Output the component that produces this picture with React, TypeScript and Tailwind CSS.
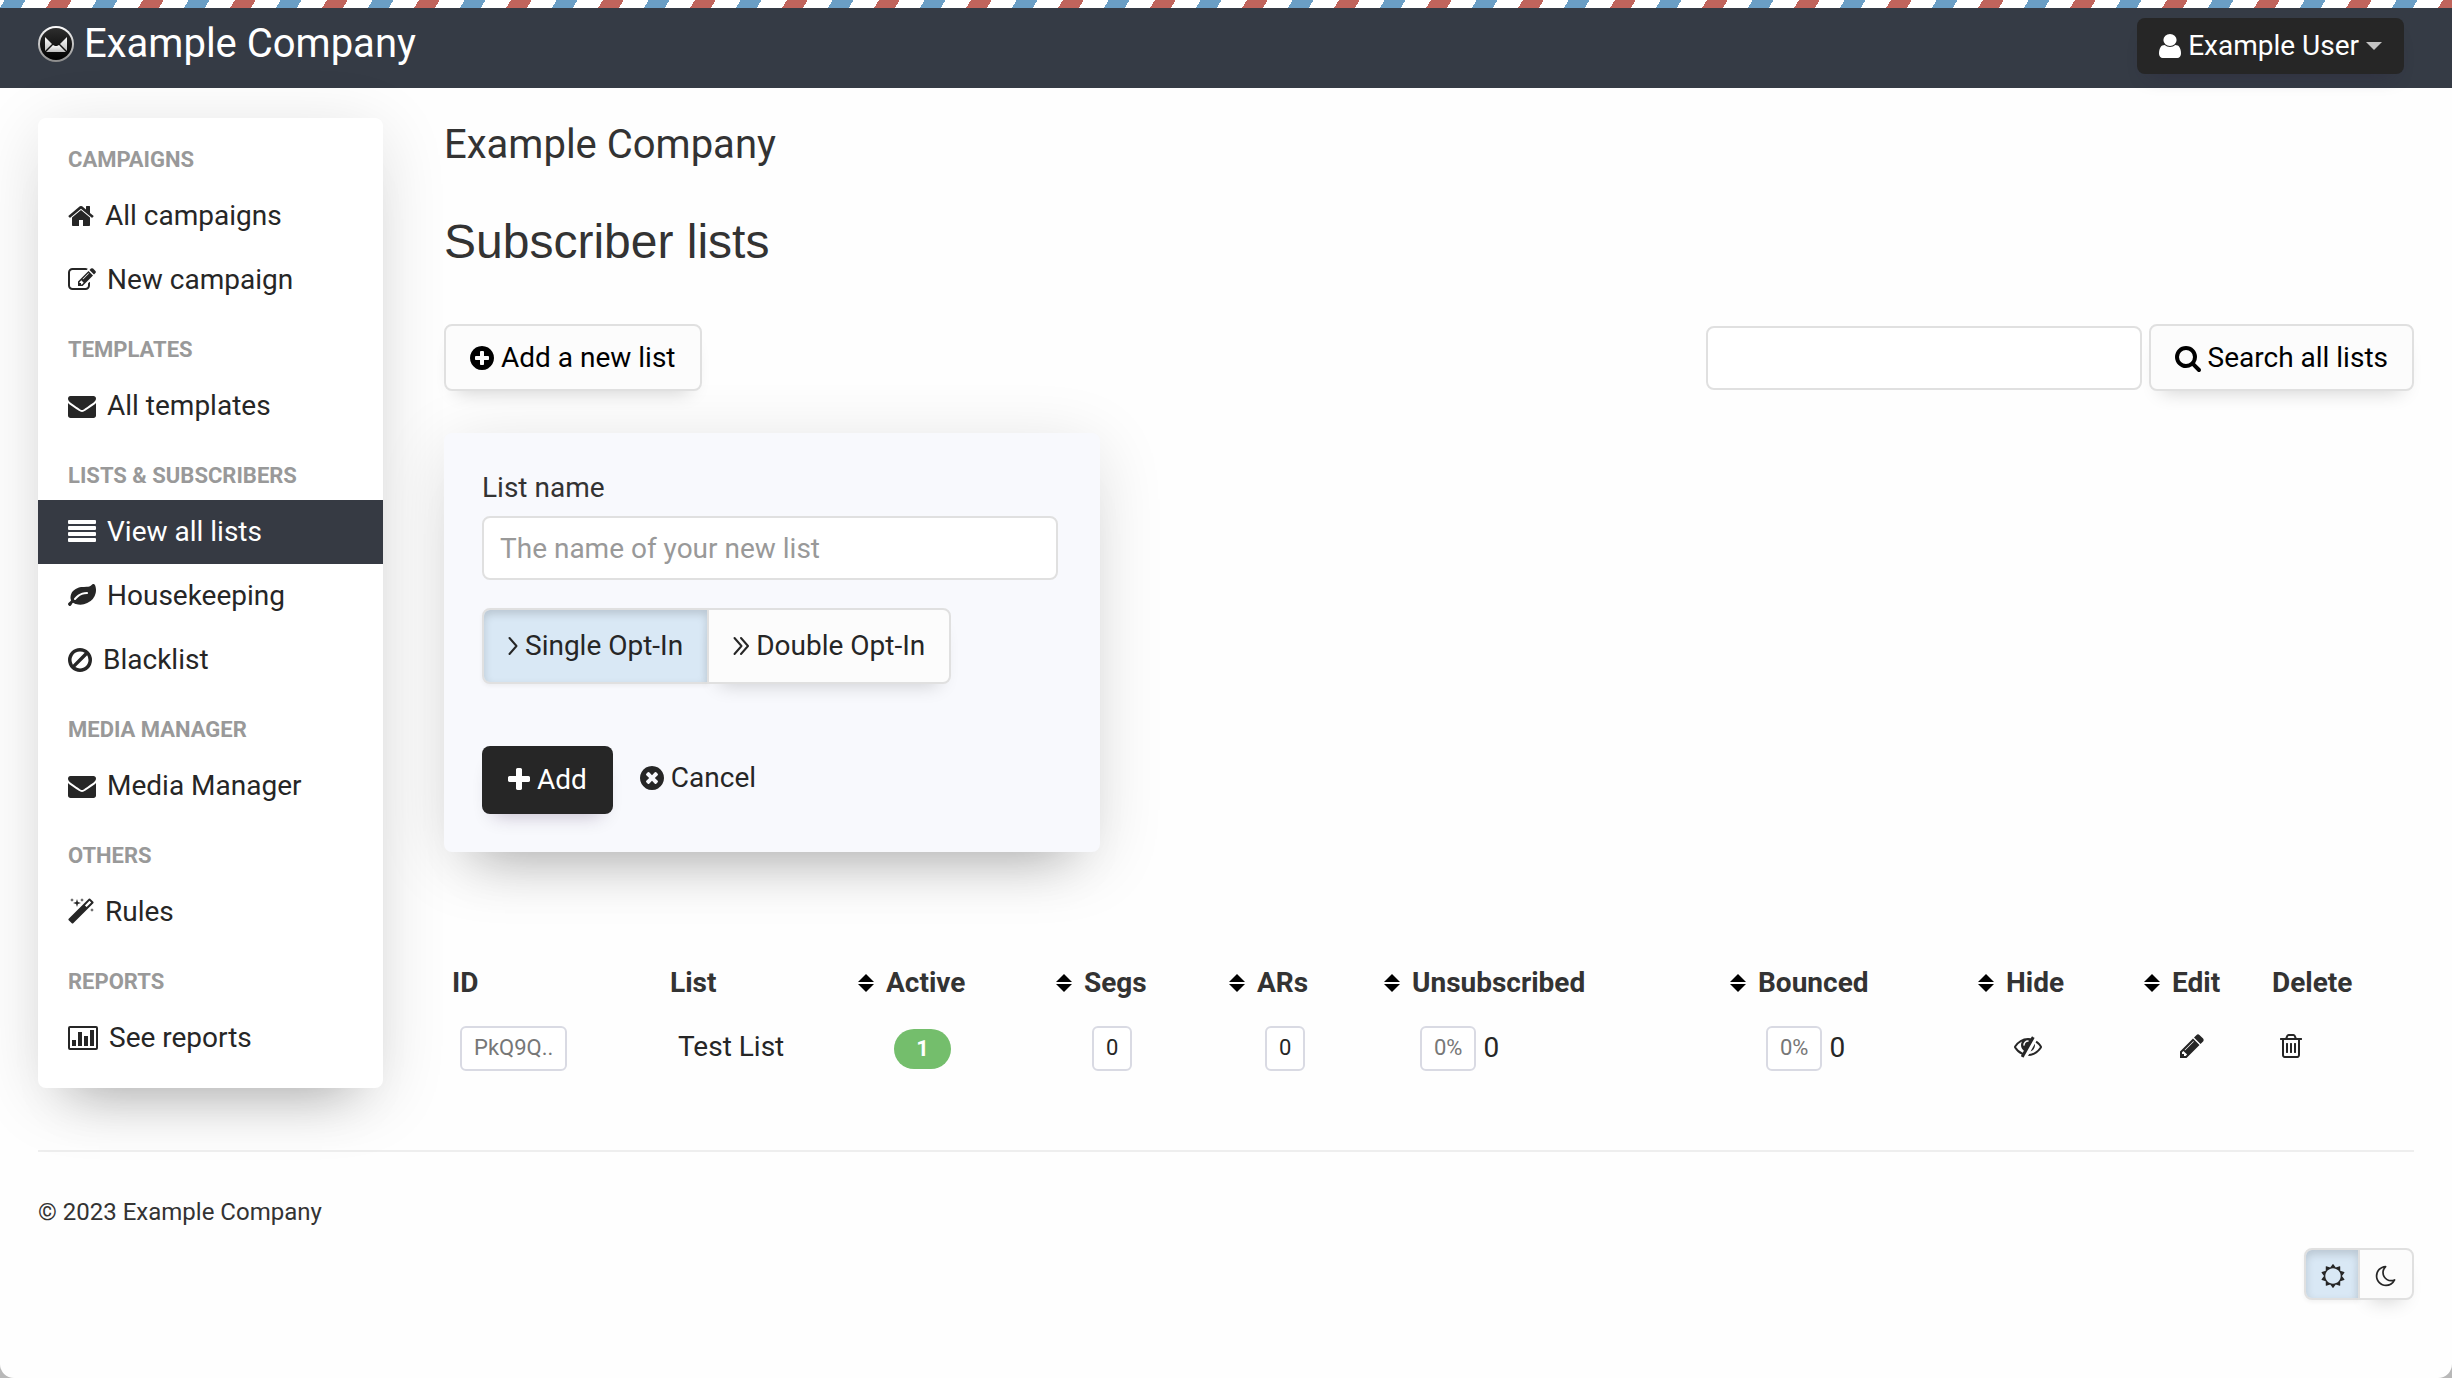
import React, { useState } from "react";

type IconDef = { box: string; w: number; h: number; d: string; stretch?: boolean };

const CIRCLE =
  "m387-226q0 209-103 385.5t-279.5 279.5-385.5 103-385.5-103-279.5-279.5-103-385.5 103-385.5 279.5-279.5 385.5-103 385.5 103 279.5 279.5 103 385.5z";

const icons = {
  home: {
    box: "89 0 1614 1792", w: 26, h: 28,
    d: "M1472 992v480q0 26-19 45t-45 19h-384v-384h-256v384h-384q-26 0-45-19t-19-45v-480q0-1 .5-3t.5-3l575-474 575 474q1 2 1 6zm223-69l-62 74q-8 9-21 11h-3q-13 0-21-7l-692-577-692 577q-12 8-24 7-13-2-21-11l-62-74q-8-10-7-23.5t11-21.5l719-599q32-26 76-26t76 26l244 204v-195q0-14 9-23t23-9h192q14 0 23 9t9 23v408l219 182q10 8 11 21.5t-7 23.5z",
  },
  edit: {
    box: "0 0 1792 1792", w: 28, h: 28,
    d: "M888 1184l116-116-152-152-116 116v56h96v96h56zm440-720q-16-16-33 1l-350 350q-17 17-1 33t33-1l350-350q17-17 1-33zm80 594v190q0 119-84.5 203.5t-203.5 84.5h-832q-119 0-203.5-84.5t-84.5-203.5v-832q0-119 84.5-203.5t203.5-84.5h832q63 0 117 25 15 7 18 23 3 17-9 29l-49 49q-14 14-32 8-23-6-45-6h-832q-66 0-113 47t-47 113v832q0 66 47 113t113 47h832q66 0 113-47t47-113v-126q0-13 9-22l64-64q15-15 35-7t20 29zm-96-738l288 288-672 672h-288v-288zm444 132l-92 92-288-288 92-92q28-28 68-28t68 28l152 152q28 28 28 68t-28 68z",
  },
  envelope: {
    box: "0 0 1792 1792", w: 28, h: 28,
    d: "M1792 710v794q0 66-47 113t-113 47h-1472q-66 0-113-47t-47-113v-794q44 49 101 87 362 246 497 345 57 42 92.5 65.5t94.5 48 110 24.5h2q51 0 110-24.5t94.5-48 92.5-65.5q170-123 498-345 57-39 100-87zm0-294q0 79-49 151t-122 123q-376 261-468 325-10 7-42.5 31t-54 38.5-52 32.5-57.5 27-50 9h-2q-23 0-50-9t-57.5-27-52-32.5-54-38.5-42.5-31q-91-64-262-182.5t-205-142.5q-62-42-117-115.5t-55-136.5q0-78 41.5-130t118.5-52h1472q65 0 112.5 47t47.5 113z",
  },
  rows: {
    box: "0 0 28 28", w: 28, h: 28,
    d: "M1 2h26a1 1 0 0 1 1 1v2a1 1 0 0 1-1 1H1a1 1 0 0 1-1-1V3a1 1 0 0 1 1-1zM1 8h26a1 1 0 0 1 1 1v2a1 1 0 0 1-1 1H1a1 1 0 0 1-1-1V9a1 1 0 0 1 1-1zM1 14h26a1 1 0 0 1 1 1v2a1 1 0 0 1-1 1H1a1 1 0 0 1-1-1v-2a1 1 0 0 1 1-1zM1 20h26a1 1 0 0 1 1 1v2a1 1 0 0 1-1 1H1a1 1 0 0 1-1-1v-2a1 1 0 0 1 1-1z",
  },
  leaf: {
    box: "0 0 1792 1792", w: 28, h: 28,
    d: "M1280 704q0-26-19-45t-45-19q-172 0-318 49.5t-259.5 134-235.5 219.5q-19 21-19 45 0 26 19 45t45 19q24 0 45-19 27-24 74-71t67-66q137-124 268.5-176t313.5-52q26 0 45-19t19-45zm512-198q0 95-20 193-46 224-184.5 383t-357.5 268q-214 108-438 108-148 0-286-47-15-5-88-42t-96-37q-16 0-39.5 32t-45 70-52.5 70-60 32q-43 0-63.5-17.5t-45.5-59.5q-2-4-6-11t-5.5-10-3-9.5-1.5-13.5q0-35 31-73.5t68-65.5 68-56 31-48q0-4-14-38t-16-44q-9-51-9-104 0-115 43.5-220t119-184.5 170.5-139 204-95.5q55-18 145-25.5t179.5-9 178.5-6 163.5-24 113.5-56.5l29.5-29.5 29.5-28 27-20 36.5-16 43.5-4.5q39 0 70.5 46t47.5 112 24 124 8 96z",
  },
  ban: {
    box: "128 0 1536 1792", w: 24, h: 28,
    d: "M1440 893q0-161-87-295l-754 753q137 89 297 89 111 0 211.5-43.5t173.5-116.5 116-174.5 43-212.5zm-999 299l755-754q-135-91-300-91-148 0-273 73t-198 199-73 274q0 162 89 299zm1223-299q0 157-61 300t-163.5 246-245 164-298.5 61-298.5-61-245-164-163.5-246-61-300 61-299.5 163.5-245.5 245-164 298.5-61 298.5 61 245 164 163.5 245.5 61 299.5z",
  },
  magic: {
    box: "64 0 1664 1792", w: 26, h: 28,
    d: "M1254 581l293-293-107-107-293 293zm447-293q0 27-18 45l-1286 1286q-18 18-45 18t-45-18l-198-198q-18-18-18-45t18-45l1286-1286q18-18 45-18t45 18l198 198q18 18 18 45zm-1351-190l98 30-98 30-30 98-30-98-98-30 98-30 30-98zm350 162l196 60-196 60-60 196-60-196-196-60 196-60 60-196zm930 478l98 30-98 30-30 98-30-98-98-30 98-30 30-98zm-640-640l98 30-98 30-30 98-30-98-98-30 98-30 30-98z",
  },
  chart: {
    box: "0 0 30 28", w: 30, h: 28,
    d: "M2 2h26a2 2 0 0 1 2 2v20a2 2 0 0 1-2 2H2a2 2 0 0 1-2-2V4a2 2 0 0 1 2-2zM2 4v20h26V4zM4 16h4v6H4zM10 8h4v14h-4zM16 12h4v10h-4zM22 6h4v16h-4z",
  },
  user: {
    box: "256 0 1280 1536", w: 22, h: 24, stretch: true,
    d: "M1536 1271q0 109-62.5 187t-150.5 78h-854q-88 0-150.5-78t-62.5-187q0-85 8.5-160.5t31.5-152 58.5-131 94-89 134.5-34.5q131 128 313 128t313-128q76 0 134.5 34.5t94 89 58.5 131 31.5 152 8.5 160.5zm-256-887q0 159-112.5 271.5t-271.5 112.5-271.5-112.5-112.5-271.5 112.5-271.5 271.5-112.5 271.5 112.5 112.5 271.5z",
  },
  search: {
    box: "64 0 1664 1792", w: 26, h: 28,
    d: "M1216 832q0-185-131.5-316.5t-316.5-131.5-316.5 131.5-131.5 316.5 131.5 316.5 316.5 131.5 316.5-131.5 131.5-316.5zm512 832q0 52-38 90t-90 38q-54 0-90-38l-343-342q-179 124-399 124-143 0-273.5-55.5t-225-150-150-225-55.5-273.5 55.5-273.5 150-225 225-150 273.5-55.5 273.5 55.5 225 150 150 225 55.5 273.5q0 220-124 399l343 343q37 37 37 90z",
  },
  plusCircle: {
    box: "128 0 1536 1792", w: 24, h: 28,
    d: "M1344 960v-128q0-26-19-45t-45-19h-256v-256q0-26-19-45t-45-19h-128q-26 0-45 19t-19 45v256h-256q-26 0-45 19t-19 45v128q0 26 19 45t45 19h256v256q0 26 19 45t45 19h128q26 0 45-19t19-45v-256h256q26 0 45-19t19-45zm320-64q0 209-103 385.5t-279.5 279.5-385.5 103-385.5-103-279.5-279.5-103-385.5 103-385.5 279.5-279.5 385.5-103 385.5 103 279.5 279.5 103 385.5z",
  },
  timesCircle: {
    box: "128 0 1536 1792", w: 24, h: 28,
    d:
      "M1277 1122q0-26-19-45l-181-181 181-181q19-19 19-45 0-27-19-46l-90-90q-19-19-46-19-26 0-45 19l-181 181-181-181q-19-19-45-19-27 0-46 19l-90 90q-19 19-19 46 0 26 19 45l181 181-181 181q-19 19-19 45 0 27 19 46l90 90q19 19 46 19 26 0 45-19l181-181 181 181q19 19 45 19 27 0 46-19l90-90q19-19 19-46z" +
      CIRCLE,
  },
  plus: {
    box: "192 0 1408 1792", w: 22, h: 28,
    d: "M1600 736v192q0 40-28 68t-68 28h-416v416q0 40-28 68t-68 28h-192q-40 0-68-28t-28-68v-416h-416q-40 0-68-28t-28-68v-192q0-40 28-68t68-28h416v-416q0-40 28-68t68-28h192q40 0 68 28t28 68v416h416q40 0 68 28t28 68z",
  },
  pencil: {
    box: "128 128 1536 1536", w: 24, h: 24,
    d: "M491 1536l91-91-235-235-91 91v107h128v128h107zm523-928q0-22-22-22-10 0-17 7l-542 542q-7 7-7 17 0 22 22 22 10 0 17-7l542-542q7-7 7-17zm-54-192l416 416-832 832h-416v-416zm683 96q0 53-37 90l-166 166-416-416 166-165q36-38 90-38 53 0 91 38l235 234q37 39 37 91z",
  },
  trash: {
    box: "192 128 1408 1536", w: 22, h: 24,
    d: "M704 736v576q0 14-9 23t-23 9h-64q-14 0-23-9t-9-23v-576q0-14 9-23t23-9h64q14 0 23 9t9 23zm256 0v576q0 14-9 23t-23 9h-64q-14 0-23-9t-9-23v-576q0-14 9-23t23-9h64q14 0 23 9t9 23zm256 0v576q0 14-9 23t-23 9h-64q-14 0-23-9t-9-23v-576q0-14 9-23t23-9h64q14 0 23 9t9 23zm128 724v-948h-896v948q0 22 7 40.5t14.5 27 10.5 8.5h832q3 0 10.5-8.5t14.5-27 7-40.5zm-672-1076h448l-48-117q-7-9-17-11h-317q-10 2-17 11zm928 32v64q0 14-9 23t-23 9h-96v948q0 83-47 143.5t-113 60.5h-832q-66 0-113-58.5t-47-141.5v-952h-96q-14 0-23-9t-9-23v-64q0-14 9-23t23-9h309l70-167q15-37 54-63t79-26h320q40 0 79 26t54 63l70 167h309q14 0 23 9t9 23z",
  },
  eyeSlash: {
    box: "0 128 1792 1536", w: 28, h: 24,
    d: "M555 1335l78-141q-87-63-136-159t-49-203q0-121 61-225-229 117-381 353 167 258 427 375zm389-759q0-20-14-34t-34-14q-125 0-214.5 89.5t-89.5 214.5q0 20 14 34t34 14 34-14 14-34q0-86 61-147t147-61q20 0 34-14t14-34zm363-191q0 7-1 9-106 189-316 567t-315 566l-49 89q-10 16-28 16-12 0-134-70-16-10-16-28 0-12 44-87-143-65-263.5-173t-208.5-245q-20-31-20-69t20-69q153-235 380-371t496-136q89 0 180 17l54-97q10-16 28-16 5 0 18 6t31 15.5 33 18.5 31.5 18.5 19.5 11.5q16 10 16 27zm37 447q0 139-79 253.5t-209 164.5l280-502q8 45 8 84zm448 128q0 35-20 69-39 64-109 145-150 172-347.5 267t-419.5 95l74-132q212-18 392.5-137t301.5-307q-115-179-282-294l63-112q95 64 182.5 153t144.5 184q20 34 20 69z",
  },
  sun: {
    box: "0 0 1792 1792", w: 24, h: 24,
    d: "M1472 896q0-117-45.5-223.5t-123-184-184-123-223.5-45.5-223.5 45.5-184 123-123 184-45.5 223.5 45.5 223.5 123 184 184 123 223.5 45.5 223.5-45.5 184-123 123-184 45.5-223.5zm276 277q-4 15-20 20l-292 96v306q0 16-13 26-15 10-29 4l-292-94-180 248q-10 13-26 13t-26-13l-180-248-292 94q-14 6-29-4-13-10-13-26v-306l-292-96q-16-5-20-20-5-17 4-29l180-248-180-248q-9-13-4-29 4-15 20-20l292-96v-306q0-16 13-26 15-10 29-4l292 94 180-248q9-12 26-12t26 12l180 248 292-94q14-6 29 4 13 10 13 26v306l292 96q16 5 20 20 5 16-4 29l-180 248 180 248q9 12 4 29z",
  },
  moon: {
    box: "0 0 1792 1792", w: 24, h: 24,
    d: "M1390 1303q-54 9-110 9-182 0-337-90t-245-245-90-337q0-192 104-357-201 60-328.5 229t-127.5 384q0 130 51 248.5t136.5 204 204 136.5 248.5 51q144 0 273.5-61.5t220.5-171.5zm203-85q-94 203-283.5 324.5t-413.5 121.5q-156 0-298-61t-245-164-164-245-61-298q0-153 57.5-292.5t156-241.5 235.5-164.5 290-68.5q44-2 61 39 18 41-15 72-86 78-131.5 181.5t-45.5 218.5q0 148 73 273t198 198 273 73q118 0 228-51 41-18 72 13 14 14 17.5 34t-4.5 38z",
  },
} satisfies Record<string, IconDef>;

type IconName = keyof typeof icons;

function Icon({ name, className = "" }: { name: IconName; className?: string }) {
  const icon: IconDef = icons[name];
  return (
    <svg
      aria-hidden="true"
      viewBox={icon.box}
      width={icon.w}
      height={icon.h}
      preserveAspectRatio={icon.stretch ? "none" : "xMidYMid meet"}
      fill="currentColor"
      fillRule="evenodd"
      className={`shrink-0 ${className}`}
    >
      <path d={icon.d} />
    </svg>
  );
}

function Angle({ double = false }: { double?: boolean }) {
  return (
    <svg
      aria-hidden="true"
      viewBox={double ? "0 0 16 20" : "0 0 10 20"}
      width={double ? 16 : 10}
      height={20}
      fill="none"
      stroke="currentColor"
      strokeWidth={2}
      strokeLinecap="round"
      strokeLinejoin="round"
      className="shrink-0"
    >
      <path d="M1.500 2l7 8-7 8" />
      {double && <path d="M8 2l7 8-7 8" />}
    </svg>
  );
}

function Logo() {
  return (
    <svg aria-hidden="true" viewBox="0 0 36 36" className="size-9 shrink-0">
      <defs>
        <linearGradient id="ring" x1="0" y1="0" x2="0" y2="1">
          <stop offset="0" stopColor="#ffffff" />
          <stop offset="1" stopColor="#8a8a8a" />
        </linearGradient>
        <linearGradient id="disc" x1="0" y1="0" x2="0" y2="1">
          <stop offset="0" stopColor="#2e2e2e" />
          <stop offset="1" stopColor="#000000" />
        </linearGradient>
        <linearGradient id="mail" x1="0" y1="0" x2="0" y2="1">
          <stop offset="0" stopColor="#ffffff" />
          <stop offset="1" stopColor="#bdbdbd" />
        </linearGradient>
      </defs>
      <circle cx="18" cy="18" r="18" fill="url(#ring)" />
      <circle cx="18" cy="18" r="16" fill="url(#disc)" />
      <path d="M7 11l7 7-7 7z" fill="url(#mail)" />
      <path d="M29 11l-7 7 7 7z" fill="url(#mail)" />
      <path d="M15 19l2 1h2l2-1 7 7H8z" fill="url(#mail)" />
    </svg>
  );
}

const navGroups: { title: string; items: { label: string; icon: IconName; active?: boolean }[] }[] = [
  { title: "CAMPAIGNS", items: [{ label: "All campaigns", icon: "home" }, { label: "New campaign", icon: "edit" }] },
  { title: "TEMPLATES", items: [{ label: "All templates", icon: "envelope" }] },
  {
    title: "LISTS & SUBSCRIBERS",
    items: [
      { label: "View all lists", icon: "rows", active: true },
      { label: "Housekeeping", icon: "leaf" },
      { label: "Blacklist", icon: "ban" },
    ],
  },
  { title: "MEDIA MANAGER", items: [{ label: "Media Manager", icon: "envelope" }] },
  { title: "OTHERS", items: [{ label: "Rules", icon: "magic" }] },
  { title: "REPORTS", items: [{ label: "See reports", icon: "chart" }] },
];

const cardShadow = "shadow-[0_12px_70px_-4px_rgba(0,0,0,0.14),0_40px_50px_-36px_rgba(0,0,0,0.25)]";

function Sidebar() {
  return (
    <nav aria-label="Main" className={`w-[345px] shrink-0 rounded-lg bg-white pt-1 pb-[18px] ${cardShadow}`}>
      {navGroups.map((group) => (
        <section key={group.title}>
          <h2 className="px-[30px] pt-[14px] text-[22px] leading-[48px] font-bold text-[#999999]">{group.title}</h2>
          <ul>
            {group.items.map((item) => (
              <li key={item.label}>
                <a
                  href="#"
                  aria-current={item.active ? "page" : undefined}
                  className={`flex h-16 items-center gap-[11px] px-[30px] ${
                    item.active ? "bg-[#363a43] text-white" : "text-[#262626]"
                  }`}
                >
                  <Icon name={item.icon} />
                  {item.label}
                </a>
              </li>
            ))}
          </ul>
        </section>
      ))}
    </nav>
  );
}

const buttonShadow = "shadow-[0_12px_20px_-12px_rgba(0,0,0,0.2)]";
const pressed =
  "bg-[#d9e8f5] shadow-[inset_0_4px_8px_rgba(0,0,0,0.15),0_2px_4px_rgba(0,0,0,0.05)]";

function NewListForm() {
  const [optIn, setOptIn] = useState<"single" | "double">("single");
  return (
    <form
      onSubmit={(e) => e.preventDefault()}
      className={`mt-[42px] w-[656px] rounded-lg bg-[#f8f9fd] px-[38px] pt-[35px] pb-[38px] ${cardShadow}`}
    >
      <label htmlFor="list-name" className="block leading-10">
        List name
      </label>
      <input
        id="list-name"
        type="text"
        placeholder="The name of your new list"
        className="mt-2 block h-16 w-[576px] rounded-lg border-2 border-[#e0e0e0] bg-white px-4 placeholder:text-[#999999]"
      />
      <div className="mt-7 flex text-[#262626]" role="group" aria-label="Opt-in type">
        <button
          type="button"
          aria-pressed={optIn === "single"}
          onClick={() => setOptIn("single")}
          className={`flex h-[76px] items-center gap-[7px] rounded-l-lg border-2 border-[#e0e0e0] px-6 ${
            optIn === "single" ? pressed : `bg-[#fcfcfc] ${buttonShadow}`
          }`}
        >
          <Angle />
          Single Opt-In
        </button>
        <button
          type="button"
          aria-pressed={optIn === "double"}
          onClick={() => setOptIn("double")}
          className={`-ml-0.5 flex h-[76px] items-center gap-[7px] rounded-r-lg border-2 border-[#e0e0e0] px-6 ${
            optIn === "double" ? pressed : `bg-[#fcfcfc] ${buttonShadow}`
          }`}
        >
          <Angle double />
          Double Opt-In
        </button>
      </div>
      <div className="mt-[62px] flex gap-[27px]">
        <button
          type="submit"
          className="flex h-[68px] items-center gap-[7px] rounded-lg bg-[#262626] px-[26px] text-white shadow-[0_12px_20px_-12px_rgba(40,10,60,0.3)]"
        >
          <Icon name="plus" />
          Add
        </button>
        <a href="#" className="flex h-16 items-center gap-[7px] text-[#262626]">
          <Icon name="timesCircle" />
          Cancel
        </a>
      </div>
    </form>
  );
}

const columns: { label: string; width: string; sortable: boolean }[] = [
  { label: "ID", width: "w-[218px]", sortable: false },
  { label: "List", width: "w-[216px]", sortable: true },
  { label: "Active", width: "w-[198px]", sortable: true },
  { label: "Segs", width: "w-[173px]", sortable: true },
  { label: "ARs", width: "w-[155px]", sortable: true },
  { label: "Unsubscribed", width: "w-[346px]", sortable: true },
  { label: "Bounced", width: "w-[248px]", sortable: true },
  { label: "Hide", width: "w-[166px]", sortable: true },
  { label: "Edit", width: "w-[100px]", sortable: false },
  { label: "Delete", width: "w-[150px]", sortable: false },
];

function SortMark() {
  return (
    <svg aria-hidden="true" viewBox="0 0 16 18" width={16} height={18} className="shrink-0 fill-black">
      <path d="M8 0l8 8H0zM0 10h16l-8 8z" />
    </svg>
  );
}

function Tag({ children, muted = false }: { children: React.ReactNode; muted?: boolean }) {
  return (
    <span
      className={`inline-flex h-[45px] items-center rounded-md border-2 border-[#d9dae3] bg-white px-3 text-[22px] ${
        muted ? "text-[#777777]" : "text-[#262626]"
      }`}
    >
      {children}
    </span>
  );
}

function ListTable() {
  return (
    <table className="mt-[99px] w-full table-fixed text-left">
      <thead>
        <tr>
          {columns.map((c) => (
            <th key={c.label} scope="col" className={`${c.width} h-16 p-0 font-bold`}>
              {c.sortable ? (
                <button type="button" className="flex w-full items-center justify-between pr-1 pl-2 font-bold">
                  {c.label}
                  <SortMark />
                </button>
              ) : (
                <span className="pl-2">{c.label}</span>
              )}
            </th>
          ))}
        </tr>
      </thead>
      <tbody>
        <tr className="h-[66px] text-[#262626]">
          <td className="pl-4"><Tag muted>PkQ9Q..</Tag></td>
          <td className="pb-0.5 pl-4"><a href="#">Test List</a></td>
          <td className="pl-4">
            <span className="inline-flex h-10 min-w-[57px] items-center justify-center rounded-full bg-[#74be6c] text-[22px] font-bold text-white">
              1
            </span>
          </td>
          <td className="pl-4"><Tag>0</Tag></td>
          <td className="pl-4"><Tag>0</Tag></td>
          <td className="pl-4">
            <span className="flex items-center gap-[7px]"><Tag muted>0%</Tag> 0</span>
          </td>
          <td className="pl-4">
            <span className="flex items-center gap-[7px]"><Tag muted>0%</Tag> 0</span>
          </td>
          <td className="pb-1 pl-4">
            <button type="button" aria-label="Hide" className="block"><Icon name="eyeSlash" /></button>
          </td>
          <td className="pb-1 pl-4">
            <button type="button" aria-label="Edit" className="block"><Icon name="pencil" /></button>
          </td>
          <td className="pb-1 pl-4">
            <button type="button" aria-label="Delete" className="block"><Icon name="trash" /></button>
          </td>
        </tr>
      </tbody>
    </table>
  );
}

function ThemeSwitch() {
  const [dark, setDark] = useState(false);
  return (
    <div className="flex text-[#262626]" role="group" aria-label="Theme">
      <button
        type="button"
        aria-label="Light"
        aria-pressed={!dark}
        onClick={() => setDark(false)}
        className={`flex h-[52px] w-14 items-center justify-center rounded-l-lg border-2 border-[#e0e0e0] pt-1 pl-0.5 ${
          dark ? "bg-[#fcfcfc]" : pressed
        }`}
      >
        <Icon name="sun" />
      </button>
      <button
        type="button"
        aria-label="Dark"
        aria-pressed={dark}
        onClick={() => setDark(true)}
        className={`-ml-0.5 flex h-[52px] w-14 items-center justify-center rounded-r-lg border-2 border-[#e0e0e0] pt-1 ${
          dark ? pressed : `bg-[#fcfcfc] ${buttonShadow}`
        }`}
      >
        <Icon name="moon" />
      </button>
    </div>
  );
}

export default function App() {
  return (
    <div className="bg-[#b8b8b8]">
      <div className="min-h-screen overflow-hidden rounded-b-[14px] bg-[#fefefe] font-['Roboto',sans-serif] text-[28px] leading-10 text-[#333333]">
        <header className="bg-[#353b45]">
          <div className="h-2 bg-white bg-[linear-gradient(120deg,white_4px,#6a9ec5_4px,#6a9ec5_22px,white_22px,white_44px,#c0645c_44px,#c0645c_62px,white_62px)] bg-[length:92px_8px]" />
          <div className="flex h-20 items-start justify-between pr-12 pl-[38px]">
            <a href="#" className="mt-3 flex items-center gap-[10px] text-[40px] leading-[48px] text-white">
              <Logo />
              Example Company
            </a>
            <button
              type="button"
              aria-haspopup="menu"
              className="mt-[10px] flex h-14 items-center gap-[7px] rounded-lg bg-[#262626] px-[22px] text-white shadow-[0_12px_20px_-12px_rgba(40,30,60,0.4)]"
            >
              <Icon name="user" />
              Example User
              <svg aria-hidden="true" viewBox="0 0 16 8" width={16} height={8} className="fill-[#c4c4c4]">
                <path d="M0 0h16L8 8z" />
              </svg>
            </button>
          </div>
        </header>

        <div className="flex items-start gap-[61px] px-[38px] pt-[30px]">
          <Sidebar />
          <main className="min-w-0 flex-1">
            <p className="text-[40px] leading-[54px]">Example Company</p>
            <h1 className="mt-[42px] font-['Liberation_Sans',sans-serif] text-5xl leading-[56px] font-normal">
              Subscriber lists
            </h1>
            <div className="mt-[54px] flex items-center justify-between text-black">
              <button
                type="button"
                className={`flex h-[67px] items-center gap-[7px] rounded-lg border-2 border-[#e0e0e0] bg-[#fcfcfc] px-6 ${buttonShadow}`}
              >
                <Icon name="plusCircle" />
                Add a new list
              </button>
              <form role="search" onSubmit={(e) => e.preventDefault()} className="flex items-center gap-[7px]">
                <input
                  type="search"
                  aria-label="Search all lists"
                  className="h-16 w-[436px] rounded-lg border-2 border-[#e0e0e0] bg-white px-4"
                />
                <button
                  type="submit"
                  className={`flex h-[67px] items-center gap-[7px] rounded-lg border-2 border-[#e0e0e0] bg-[#fcfcfc] px-6 ${buttonShadow}`}
                >
                  <Icon name="search" />
                  Search all lists
                </button>
              </form>
            </div>
            <NewListForm />
            <ListTable />
          </main>
        </div>

        <footer className="mx-[38px] mt-[62px] border-t-2 border-[#eeeeee] pt-10 text-2xl leading-10">
          <p>© 2023 Example Company</p>
          <div className="mt-4 flex justify-end">
            <ThemeSwitch />
          </div>
        </footer>
      </div>
    </div>
  );
}
